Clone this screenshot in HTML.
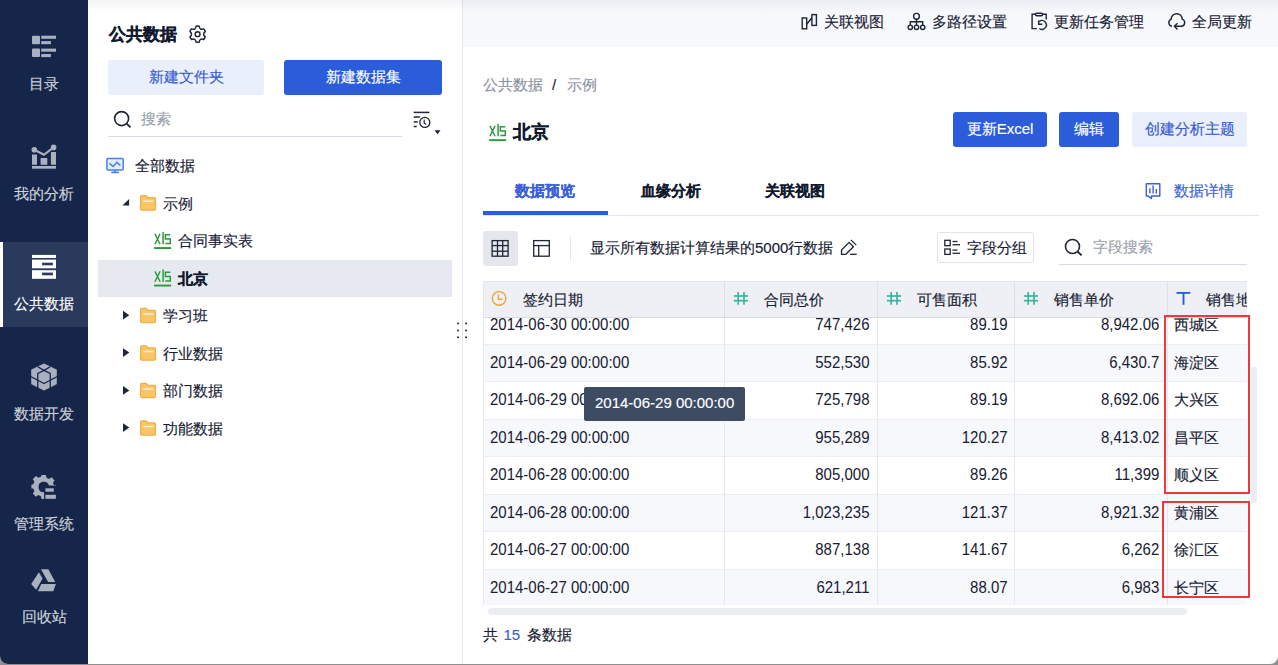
<!DOCTYPE html>
<html><head><meta charset="utf-8">
<style>
*{box-sizing:border-box;margin:0;padding:0}
html,body{width:1278px;height:665px;overflow:hidden;background:#8f8f8f}
body{font-family:"Liberation Sans",sans-serif;font-size:15px;color:#172033;position:relative;-webkit-text-stroke:.15px currentColor}
#win{position:absolute;left:0;top:0;width:1278px;height:663.5px;background:#fff;border-radius:0 0 8px 8px;overflow:hidden}
.a{position:absolute;white-space:nowrap}
.t{position:absolute;white-space:nowrap;line-height:20px;height:20px}
svg{position:absolute;overflow:visible}
#side{left:0;top:0;width:88px;height:100%;background:#16264b}
.sl{left:0;width:88px;text-align:center;color:#cdd2da;margin-top:-0.5px}
#topsh{left:88px;top:0;width:1190px;height:12px;background:linear-gradient(rgba(20,30,60,.05),rgba(20,30,60,0))}
#hdr{left:463px;top:0;width:815px;height:47px;background:#f7f8fc}
.btn{position:absolute;border-radius:3px;text-align:center;line-height:33.2px;height:35px}
.pb{background:#2b5cd9;color:#fff}
.lb{background:#e9effb;color:#3558d3}
.tree{color:#172033}
.cell{position:absolute;line-height:20px;height:20px;white-space:nowrap}
.num{-webkit-text-stroke:0;transform:translateY(.6px) scaleY(1.08);transform-origin:50% 5px}
</style></head><body>
<div id="win">
 <!-- sidebar -->
 <div id="side" class="a"></div>
 <div class="a" style="left:0;top:242px;width:88px;height:85px;background:#2a3a5d"></div>
 <div class="a" style="left:0;top:242px;width:3px;height:85px;background:#fff"></div>
 <div class="t sl" style="top:74.5px">目录</div>
 <div class="t sl" style="top:184.5px">我的分析</div>
 <div class="t sl" style="top:294.5px;color:#fff">公共数据</div>
 <div class="t sl" style="top:404.5px">数据开发</div>
 <div class="t sl" style="top:514.5px">管理系统</div>
 <div class="t sl" style="top:607.5px">回收站</div>

 <!-- sidebar icons -->
 <svg style="left:0;top:0" width="88" height="665" viewBox="0 0 88 665">
  <g fill="#a9b0bf">
   <rect x="32" y="35.7" width="8" height="8.5" rx="1"/>
   <rect x="41.2" y="35.7" width="14.8" height="3.1"/>
   <rect x="41.2" y="41.1" width="9.7" height="3.1"/>
   <rect x="32" y="48.6" width="8" height="8.5" rx="1"/>
   <rect x="41.2" y="48.6" width="14.8" height="3.1"/>
   <rect x="41.2" y="54" width="9.7" height="3.1"/>
  </g>
  <g fill="#a9b0bf">
   <rect x="32" y="154.5" width="5" height="10.3"/>
   <rect x="40.6" y="158" width="6.7" height="6.8"/>
   <rect x="50.9" y="152" width="5.1" height="12.8"/>
   <rect x="32" y="166" width="24" height="2.7"/>
   <polyline points="34.3,149.8 43.9,154.8 53.6,147.4" fill="none" stroke="#16264b" stroke-width="4.4"/>
   <polyline points="34.3,149.8 43.9,154.8 53.6,147.4" fill="none" stroke="#a9b0bf" stroke-width="2.1"/>
   <circle cx="34.3" cy="149.8" r="2.8"/>
   <circle cx="53.6" cy="147.4" r="2.8"/>
  </g>
  <g fill="#fff">
   <rect x="32" y="254.9" width="24" height="3.1"/>
   <rect x="32" y="259.6" width="24" height="8.7"/>
   <rect x="32" y="270.2" width="24" height="8.6"/>
  </g>
  <rect x="42.1" y="262.7" width="10.8" height="2.6" fill="#2a3a5d"/>
  <rect x="42.1" y="272.6" width="10.8" height="2.7" fill="#2a3a5d"/>
  <!-- cube -->
  <polygon points="44,363.8 56.5,369.8 56.5,384.1 44,390.2 31.5,384.1 31.5,369.8" fill="#a9b0bf" stroke="#a9b0bf" stroke-width=".6" stroke-linejoin="round"/>
  <g stroke="#16264b" stroke-width="1.3" fill="none" stroke-linejoin="miter">
   <polyline points="37.75,366.8 44,370.4 50.25,366.8"/>
   <polygon points="44,370.4 50.25,373.4 50.25,380.2 44,383.6 37.75,380.2 37.75,373.4"/>
   <line x1="30.5" y1="376.5" x2="37.75" y2="380.2"/>
   <line x1="57.5" y1="376.5" x2="50.25" y2="380.2"/>
   <line x1="37.75" y1="380.2" x2="37.75" y2="388"/>
   <line x1="50.25" y1="380.2" x2="50.25" y2="388"/>
  </g>
  <!-- gear -->
  <g transform="translate(43.7,487)">
   <path fill="#a9b0bf" d="M-2.2,-12 L2.2,-12 L2.8,-9.2 L5.4,-8.1 L7.8,-9.7 L10.9,-6.6 L9.3,-4.2 L10.1,-1.9 L12.3,-1.9 L12.3,-1.6 L5.2,-1.6 A5.3,5.3 0 1 0 0.4,5.3 L0.4,11.9 L-2.2,12 L-2.8,9.2 L-5.4,8.1 L-7.8,9.7 L-10.9,6.6 L-9.3,4.2 L-10.4,1.6 L-12.3,1.6 L-12.3,-2.2 L-10.4,-2.8 L-9.3,-5.4 L-10.9,-7.8 L-7.8,-10.9 L-5.4,-9.3 L-2.8,-10.2 Z"/>
  </g>
  <rect x="45.4" y="488.3" width="8.4" height="3.4" fill="#a9b0bf"/>
  <rect x="45.4" y="494.8" width="10.5" height="4" fill="#a9b0bf"/>
  <!-- recycle -->
  <g fill="#a9b0bf">
   <polygon points="41,569.2 48.4,569.2 55.2,582 48.1,582"/>
   <polygon points="38.9,572.2 42.6,578.6 36.2,589.8 31.2,584"/>
   <polygon points="41.3,584 55.9,584 53.2,591.2 37.9,591.2"/>
  </g>
 </svg>

 <!-- tree panel -->
 <div class="a" style="left:462px;top:0;width:1px;height:665px;background:#e4e7ee"></div>
 <div class="t" style="left:108.8px;top:23.9px;font-size:17.2px;font-weight:bold;color:#111a2e;-webkit-text-stroke:.3px #111a2e">公共数据</div>
 <svg style="left:0;top:0" width="1" height="1">
  <g transform="translate(197.6,34.2)" fill="none" stroke="#172033" stroke-width="1.45">
   <path d="M-1.55,-7.95 A8.1,8.1 0 0 1 1.55,-7.95 Q2.15,-3.72 6.11,-5.31 A8.1,8.1 0 0 1 7.66,-2.64 Q4.30,0.00 7.66,2.64 A8.1,8.1 0 0 1 6.11,5.31 Q2.15,3.72 1.55,7.95 A8.1,8.1 0 0 1 -1.55,7.95 Q-2.15,3.72 -6.11,5.31 A8.1,8.1 0 0 1 -7.66,2.64 Q-4.30,0.00 -7.66,-2.64 A8.1,8.1 0 0 1 -6.11,-5.31 Q-2.15,-3.72 -1.55,-7.95 Z" stroke-linejoin="round"/>
   <circle cx="0" cy="0" r="2.4"/>
  </g>
 </svg>
 <div class="btn lb" style="left:108px;top:60px;width:156px">新建文件夹</div>
 <div class="btn pb" style="left:284px;top:60px;width:158px">新建数据集</div>
 <svg style="left:0;top:0" width="1" height="1">
  <circle cx="121.6" cy="118.6" r="7" fill="none" stroke="#1d2538" stroke-width="1.6"/>
  <line x1="126.6" y1="123.6" x2="130.5" y2="127.3" stroke="#1d2538" stroke-width="1.8"/>
 </svg>
 <div class="t" style="left:141px;top:109px;color:#9aa1ad">搜索</div>
 <div class="a" style="left:108px;top:135.5px;width:294px;height:1px;background:#d7dbe3"></div>
 <svg style="left:0;top:0" width="1" height="1">
  <g stroke="#1d2538" stroke-width="1.5">
   <line x1="413.7" y1="112.4" x2="429.4" y2="112.4"/>
   <line x1="413.7" y1="117" x2="419.9" y2="117"/>
   <line x1="413.7" y1="121.9" x2="417.7" y2="121.9"/>
   <line x1="413.7" y1="126.5" x2="416.7" y2="126.5"/>
  </g>
  <circle cx="424.8" cy="122.4" r="5" fill="#fff" stroke="#1d2538" stroke-width="1.3"/>
  <polyline points="424.2,119.4 424.2,123.2 426.3,124.6" fill="none" stroke="#1d2538" stroke-width="1.2"/>
  <polygon points="434.5,130.3 440.5,130.3 437.5,134.3" fill="#1d2538"/>
 </svg>

 <!-- tree rows -->
 <div class="a" style="left:98px;top:260.2px;width:354px;height:36.5px;background:#e6e9f0"></div>
 <svg style="left:0;top:0" width="1" height="1">
  <rect x="106.9" y="158.6" width="16.3" height="11.3" rx="1" fill="#e5eefd" stroke="#4a80e8" stroke-width="1.5"/>
  <polyline points="109.5,163.4 113.1,166.5 116.9,162.3 120.4,165.5" fill="none" stroke="#4a80e8" stroke-width="1.6"/>
  <rect x="114.3" y="170" width="1.6" height="2" fill="#4a80e8"/>
  <rect x="111.2" y="171.6" width="7.8" height="1.6" rx=".8" fill="#4a80e8"/>
 </svg>
 <div class="t tree" style="left:135px;top:156px">全部数据</div>
 <svg style="left:0;top:0" width="1" height="1">
  <polygon points="122.4,205.6 129.1,205.6 129.1,199" fill="#1d2538"/>
 </svg>
 <div class="t tree" style="left:162.5px;top:193.5px">示例</div>
 <div class="t tree" style="left:177.5px;top:231px">合同事实表</div>
 <div class="t tree" style="left:177.5px;top:268.5px;font-weight:bold;color:#111a2e;-webkit-text-stroke:.25px #111a2e">北京</div>
 <div class="t tree" style="left:162.5px;top:306px">学习班</div>
 <div class="t tree" style="left:162.5px;top:343.5px">行业数据</div>
 <div class="t tree" style="left:162.5px;top:381px">部门数据</div>
 <div class="t tree" style="left:162.5px;top:418.5px">功能数据</div>

 <!-- header -->
 <div id="hdr" class="a"></div>
 <div id="topsh" class="a"></div>
 <div class="t" style="left:824px;top:11.5px">关联视图</div>
 <div class="t" style="left:931.5px;top:11.5px">多路径设置</div>
 <div class="t" style="left:1054px;top:11.5px">更新任务管理</div>
 <div class="t" style="left:1192px;top:11.5px">全局更新</div>

 <!-- main -->
 <div class="t" style="left:483px;top:74.5px;color:#8b929e">公共数据</div>
 <div class="t" style="left:552px;top:74.5px;color:#1d2538">/</div>
 <div class="t" style="left:566.5px;top:74.5px;color:#8b929e">示例</div>
 <div class="t" style="left:513px;top:122px;font-size:18px;font-weight:bold;color:#111a2e;-webkit-text-stroke:.3px #111a2e">北京</div>
 <div class="btn pb" style="left:953px;top:112px;width:94px">更新Excel</div>
 <div class="btn pb" style="left:1059px;top:112px;width:60px">编辑</div>
 <div class="btn lb" style="left:1132px;top:112px;width:115px">创建分析主题</div>

 <div class="t" style="left:515px;top:181px;font-weight:bold;color:#3a5fd9">数据预览</div>
 <div class="t" style="left:640.5px;top:181px;font-weight:bold;color:#111a2e">血缘分析</div>
 <div class="t" style="left:765px;top:181px;font-weight:bold;color:#111a2e">关联视图</div>
 <div class="a" style="left:483px;top:214.5px;width:776px;height:1.5px;background:#e3e6ee"></div>
 <div class="a" style="left:483px;top:211px;width:125px;height:4px;background:#2b5cd9"></div>
 <div class="t" style="left:1174px;top:181px;color:#3a5fd9">数据详情</div>

 <!-- toolbar -->
 <div class="a" style="left:483px;top:231px;width:35px;height:35px;border-radius:3px;background:#e5e7ec"></div>
 <div class="a" style="left:570px;top:236px;width:1px;height:25px;background:#e6e8ee"></div>
 <div class="t" style="left:590px;top:237.5px">显示所有数据计算结果的5000行数据</div>
 <div class="a" style="left:936.5px;top:232.4px;width:97px;height:31px;border:1px solid #dfe2e9;border-radius:3px"></div>
 <div class="t" style="left:967px;top:237.5px">字段分组</div>
 <div class="t" style="left:1092.5px;top:237px;color:#9aa1ad">字段搜索</div>
 <div class="a" style="left:1059px;top:263.5px;width:188px;height:1px;background:#d7dbe3"></div>

 <!-- table -->
 <div id="tbl" class="a" style="left:483px;top:281px;width:764px;height:324px;overflow:hidden;background:#fff">
<div class="a" style="left:0;top:36px;width:764px;height:288px;overflow:hidden">
<div class="a" style="left:0;top:-9.8px;width:764px;height:37.5px;background:#fff;border-bottom:1px solid #eceef3"></div>
<div class="cell num" style="left:7px;top:-2.75px">2014-06-30 00:00:00</div>
<div class="cell num" style="right:377.5px;top:-2.75px">747,426</div>
<div class="cell num" style="right:239.4px;top:-2.75px">89.19</div>
<div class="cell num" style="right:87.7px;top:-2.75px">8,942.06</div>
<div class="cell" style="left:691px;top:-1.85px">西城区</div>
<div class="a" style="left:0;top:27.7px;width:764px;height:37.5px;background:#f7f8fb;border-bottom:1px solid #eceef3"></div>
<div class="cell num" style="left:7px;top:34.75px">2014-06-29 00:00:00</div>
<div class="cell num" style="right:377.5px;top:34.75px">552,530</div>
<div class="cell num" style="right:239.4px;top:34.75px">85.92</div>
<div class="cell num" style="right:87.7px;top:34.75px">6,430.7</div>
<div class="cell" style="left:691px;top:35.65px">海淀区</div>
<div class="a" style="left:0;top:65.2px;width:764px;height:37.5px;background:#fff;border-bottom:1px solid #eceef3"></div>
<div class="cell num" style="left:7px;top:72.25px">2014-06-29 00:00:00</div>
<div class="cell num" style="right:377.5px;top:72.25px">725,798</div>
<div class="cell num" style="right:239.4px;top:72.25px">89.19</div>
<div class="cell num" style="right:87.7px;top:72.25px">8,692.06</div>
<div class="cell" style="left:691px;top:73.15px">大兴区</div>
<div class="a" style="left:0;top:102.7px;width:764px;height:37.5px;background:#f7f8fb;border-bottom:1px solid #eceef3"></div>
<div class="cell num" style="left:7px;top:109.75px">2014-06-29 00:00:00</div>
<div class="cell num" style="right:377.5px;top:109.75px">955,289</div>
<div class="cell num" style="right:239.4px;top:109.75px">120.27</div>
<div class="cell num" style="right:87.7px;top:109.75px">8,413.02</div>
<div class="cell" style="left:691px;top:110.65px">昌平区</div>
<div class="a" style="left:0;top:140.2px;width:764px;height:37.5px;background:#fff;border-bottom:1px solid #eceef3"></div>
<div class="cell num" style="left:7px;top:147.25px">2014-06-28 00:00:00</div>
<div class="cell num" style="right:377.5px;top:147.25px">805,000</div>
<div class="cell num" style="right:239.4px;top:147.25px">89.26</div>
<div class="cell num" style="right:87.7px;top:147.25px">11,399</div>
<div class="cell" style="left:691px;top:148.15px">顺义区</div>
<div class="a" style="left:0;top:177.7px;width:764px;height:37.5px;background:#f7f8fb;border-bottom:1px solid #eceef3"></div>
<div class="cell num" style="left:7px;top:184.75px">2014-06-28 00:00:00</div>
<div class="cell num" style="right:377.5px;top:184.75px">1,023,235</div>
<div class="cell num" style="right:239.4px;top:184.75px">121.37</div>
<div class="cell num" style="right:87.7px;top:184.75px">8,921.32</div>
<div class="cell" style="left:691px;top:185.65px">黄浦区</div>
<div class="a" style="left:0;top:215.2px;width:764px;height:37.5px;background:#fff;border-bottom:1px solid #eceef3"></div>
<div class="cell num" style="left:7px;top:222.25px">2014-06-27 00:00:00</div>
<div class="cell num" style="right:377.5px;top:222.25px">887,138</div>
<div class="cell num" style="right:239.4px;top:222.25px">141.67</div>
<div class="cell num" style="right:87.7px;top:222.25px">6,262</div>
<div class="cell" style="left:691px;top:223.15px">徐汇区</div>
<div class="a" style="left:0;top:252.7px;width:764px;height:37.5px;background:#f7f8fb;border-bottom:1px solid #eceef3"></div>
<div class="cell num" style="left:7px;top:259.75px">2014-06-27 00:00:00</div>
<div class="cell num" style="right:377.5px;top:259.75px">621,211</div>
<div class="cell num" style="right:239.4px;top:259.75px">88.07</div>
<div class="cell num" style="right:87.7px;top:259.75px">6,983</div>
<div class="cell" style="left:691px;top:260.65px">长宁区</div>
<div class="a" style="left:241.0px;top:0;width:1px;height:288px;background:#e6e8ee"></div>
<div class="a" style="left:394.0px;top:0;width:1px;height:288px;background:#e6e8ee"></div>
<div class="a" style="left:531.0px;top:0;width:1px;height:288px;background:#e6e8ee"></div>
<div class="a" style="left:683.8px;top:0;width:1px;height:288px;background:#e6e8ee"></div>
<div class="a" style="left:0;top:0;width:1px;height:288px;background:#e6e8ee"></div>
</div>
<div class="a" style="left:0;top:0;width:764px;height:36.5px;background:#eef0f5;border-top:1px solid #e3e6ee;border-bottom:1px solid #d9dde5;border-left:1px solid #e3e6ee"></div>
<div class="a" style="left:241.0px;top:0;width:1px;height:36px;background:#dcdfe7"></div>
<div class="a" style="left:394.0px;top:0;width:1px;height:36px;background:#dcdfe7"></div>
<div class="a" style="left:531.0px;top:0;width:1px;height:36px;background:#dcdfe7"></div>
<div class="a" style="left:683.8px;top:0;width:1px;height:36px;background:#dcdfe7"></div>
<div class="cell" style="left:39.8px;top:8.5px">签约日期</div>
<div class="cell" style="left:281.1px;top:8.5px">合同总价</div>
<div class="cell" style="left:434.2px;top:8.5px">可售面积</div>
<div class="cell" style="left:570.7px;top:8.5px">销售单价</div>
<div class="cell" style="left:723.4px;top:8.5px">销售地址</div>

 </div>

 <!-- ICONS -->
 <svg style="left:0;top:0" width="1278" height="665" viewBox="0 0 1278 665">
  <!-- header icons -->
  <g fill="none" stroke="#1d2538" stroke-width="1.4">
   <rect x="802.2" y="18" width="4.5" height="10.8"/>
   <rect x="811.9" y="14.6" width="4.5" height="10.8"/>
   <line x1="806.7" y1="24.2" x2="811.9" y2="17.8"/>
   <circle cx="916.5" cy="16.3" r="2.9"/>
   <line x1="916.5" y1="19.2" x2="916.5" y2="25"/>
   <polyline points="910.3,25 910.3,21.7 922.7,21.7 922.7,25"/>
   <circle cx="910.3" cy="27.3" r="2.2"/>
   <circle cx="916.5" cy="27.3" r="2.2"/>
   <circle cx="922.7" cy="27.3" r="2.2"/>
   <polyline points="1035.5,14.3 1032.1,14.3 1032.1,28.6 1036.9,28.6"/>
   <polyline points="1042.6,14.3 1046.2,14.3 1046.2,19.4"/>
   <rect x="1035.5" y="13.2" width="7.1" height="2.5" rx="1.25"/>
   <path d="M1039.2,21.5 A4.4,4.4 0 1 1 1039.3,28.5"/>
   <polyline points="1038.7,20.5 1038.7,24.3 1042.3,24.3"/>
   <path d="M1171.9,26.3 A3.7,3.7 0 0 1 1171.2,19.2 A5.3,5.3 0 0 1 1182.2,19.2 A3.7,3.7 0 0 1 1181.8,26.3 L1174.6,26.3"/>
   <polyline points="1177.5,23.3 1174.4,26.3 1177.5,29.4"/>
  </g>
  <!-- tree icons -->
  <g fill="#1d2538">
   <polygon points="123,310.8 129.3,315.2 123,319.6"/>
   <polygon points="123,348.2 129.3,352.6 123,357"/>
   <polygon points="123,386 129.3,390.4 123,394.8"/>
   <polygon points="123,423.2 129.3,427.6 123,432"/>
  </g>
    <path d="M140.6,196.8 a1.1,1.1 0 0 1 1.1,-1.1 h4.4 l2,2 h6.3 a1.1,1.1 0 0 1 1.1,1.1 v10.2 a1.1,1.1 0 0 1 -1.1,1.1 h-12.8 a1.1,1.1 0 0 1 -1.1,-1.1 z" fill="#f8c567" stroke="#f1b048" stroke-width="1.2"/>
  <rect x="143" y="200.6" width="10.3" height="1.5" rx=".7" fill="#fff0cf"/>
  <path d="M140.6,309.4 a1.1,1.1 0 0 1 1.1,-1.1 h4.4 l2,2 h6.3 a1.1,1.1 0 0 1 1.1,1.1 v10.2 a1.1,1.1 0 0 1 -1.1,1.1 h-12.8 a1.1,1.1 0 0 1 -1.1,-1.1 z" fill="#f8c567" stroke="#f1b048" stroke-width="1.2"/>
  <rect x="143" y="313.2" width="10.3" height="1.5" rx=".7" fill="#fff0cf"/>
  <path d="M140.6,346.9 a1.1,1.1 0 0 1 1.1,-1.1 h4.4 l2,2 h6.3 a1.1,1.1 0 0 1 1.1,1.1 v10.2 a1.1,1.1 0 0 1 -1.1,1.1 h-12.8 a1.1,1.1 0 0 1 -1.1,-1.1 z" fill="#f8c567" stroke="#f1b048" stroke-width="1.2"/>
  <rect x="143" y="350.7" width="10.3" height="1.5" rx=".7" fill="#fff0cf"/>
  <path d="M140.6,384.4 a1.1,1.1 0 0 1 1.1,-1.1 h4.4 l2,2 h6.3 a1.1,1.1 0 0 1 1.1,1.1 v10.2 a1.1,1.1 0 0 1 -1.1,1.1 h-12.8 a1.1,1.1 0 0 1 -1.1,-1.1 z" fill="#f8c567" stroke="#f1b048" stroke-width="1.2"/>
  <rect x="143" y="388.2" width="10.3" height="1.5" rx=".7" fill="#fff0cf"/>
  <path d="M140.6,421.9 a1.1,1.1 0 0 1 1.1,-1.1 h4.4 l2,2 h6.3 a1.1,1.1 0 0 1 1.1,1.1 v10.2 a1.1,1.1 0 0 1 -1.1,1.1 h-12.8 a1.1,1.1 0 0 1 -1.1,-1.1 z" fill="#f8c567" stroke="#f1b048" stroke-width="1.2"/>
  <rect x="143" y="425.7" width="10.3" height="1.5" rx=".7" fill="#fff0cf"/>
  <g transform="translate(154,232)" fill="none" stroke="#2b9a3b" stroke-width="1.5">
   <path d="M0.9,1.8 L6.1,12.2 M6.1,1.8 L0.9,12.2" stroke-width="1.45"/>
   <line x1="9.1" y1="0" x2="9.1" y2="12.2" stroke-width="1.5"/>
   <path d="M16.3,2.7 h-4.9 v4.2 h4.9 v4.5 h-5"/>
   <rect x="0.1" y="15.1" width="17" height="1.9" fill="#2b9a3b" stroke="none"/>
  </g>
  <g transform="translate(154,269.5)" fill="none" stroke="#2b9a3b" stroke-width="1.5">
   <path d="M0.9,1.8 L6.1,12.2 M6.1,1.8 L0.9,12.2" stroke-width="1.45"/>
   <line x1="9.1" y1="0" x2="9.1" y2="12.2" stroke-width="1.5"/>
   <path d="M16.3,2.7 h-4.9 v4.2 h4.9 v4.5 h-5"/>
   <rect x="0.1" y="15.1" width="17" height="1.9" fill="#2b9a3b" stroke="none"/>
  </g>
  <g transform="translate(489,124.1)" fill="none" stroke="#2b9a3b" stroke-width="1.5">
   <path d="M0.9,1.8 L6.1,12.2 M6.1,1.8 L0.9,12.2" stroke-width="1.45"/>
   <line x1="9.1" y1="0" x2="9.1" y2="12.2" stroke-width="1.5"/>
   <path d="M16.3,2.7 h-4.9 v4.2 h4.9 v4.5 h-5"/>
   <rect x="0.1" y="15.1" width="17" height="1.9" fill="#2b9a3b" stroke="none"/>
  </g>
 </svg>

 <svg style="left:0;top:0" width="1278" height="665" viewBox="0 0 1278 665">
  <!-- toolbar icons -->
  <g fill="none" stroke="#1d2538" stroke-width="1.3">
   <rect x="492.1" y="240.6" width="16" height="15.6"/>
   <line x1="497.5" y1="240.6" x2="497.5" y2="256.2"/>
   <line x1="502.7" y1="240.6" x2="502.7" y2="256.2"/>
   <line x1="492.1" y1="245.6" x2="508.1" y2="245.6"/>
   <line x1="492.1" y1="251.2" x2="508.1" y2="251.2"/>
   <rect x="533.7" y="240.6" width="15.6" height="15.6"/>
   <line x1="533.7" y1="245.6" x2="549.3" y2="245.6"/>
   <line x1="538.7" y1="245.6" x2="538.7" y2="256.2"/>
   <path d="M841.5,254.3 L841.5,250 L849.1,242.4 L853.4,246.7 L845.8,254.3 Z" stroke-linejoin="miter"/>
   <line x1="850.9" y1="239.9" x2="856.3" y2="245.1"/>
   <line x1="850.1" y1="254.3" x2="856.7" y2="254.3"/>
   <rect x="944.8" y="240.3" width="5.4" height="5.4"/>
   <rect x="944.8" y="249" width="5.4" height="5.4"/>
   <line x1="952.5" y1="241.5" x2="957.5" y2="241.5"/>
   <line x1="952.5" y1="244.7" x2="960" y2="244.7"/>
   <line x1="952.5" y1="250.1" x2="957.5" y2="250.1"/>
   <line x1="952.5" y1="253.3" x2="960" y2="253.3"/>
  </g>
  <circle cx="1072.5" cy="246.5" r="7" fill="none" stroke="#1d2538" stroke-width="1.6"/>
  <line x1="1077.5" y1="251.5" x2="1081.6" y2="255.4" stroke="#1d2538" stroke-width="1.8"/>
  <!-- data detail icon -->
  <g fill="none" stroke="#3a5fd9" stroke-width="1.4">
   <path d="M1148.3,196 L1146.3,196 L1146.3,183.7 L1159.8,183.7 L1159.8,196 L1151.5,196 L1151.5,198.6 Z" stroke-linejoin="round"/>
   <line x1="1149.9" y1="188.3" x2="1149.9" y2="193.5"/>
   <line x1="1153.1" y1="185.6" x2="1153.1" y2="193.5"/>
   <line x1="1156.3" y1="189" x2="1156.3" y2="193.5"/>
  </g>
  <!-- table header icons -->
  <circle cx="499.1" cy="298.4" r="6.8" fill="none" stroke="#f0a535" stroke-width="1.4"/>
  <polyline points="498.3,294.6 498.3,299.3 502.6,299.3" fill="none" stroke="#f0a535" stroke-width="1.4"/>
  <g stroke="#3ab3a0" stroke-width="1.7" id="hash1">
   <line x1="738.2" y1="292" x2="738.2" y2="304.8"/><line x1="744" y1="292" x2="744" y2="304.8"/>
   <line x1="733.9" y1="296" x2="748" y2="296"/><line x1="733.9" y1="300.7" x2="748" y2="300.7"/>
  </g>
  <g stroke="#3ab3a0" stroke-width="1.7" transform="translate(153,0)">
   <line x1="738.2" y1="292" x2="738.2" y2="304.8"/><line x1="744" y1="292" x2="744" y2="304.8"/>
   <line x1="733.9" y1="296" x2="748" y2="296"/><line x1="733.9" y1="300.7" x2="748" y2="300.7"/>
  </g>
  <g stroke="#3ab3a0" stroke-width="1.7" transform="translate(290,0)">
   <line x1="738.2" y1="292" x2="738.2" y2="304.8"/><line x1="744" y1="292" x2="744" y2="304.8"/>
   <line x1="733.9" y1="296" x2="748" y2="296"/><line x1="733.9" y1="300.7" x2="748" y2="300.7"/>
  </g>
  <g stroke="#2e5ad8" stroke-width="1.9">
   <line x1="1176.5" y1="292.9" x2="1190.3" y2="292.9"/>
   <line x1="1183.5" y1="292.9" x2="1183.5" y2="304.8"/>
  </g>
  <!-- drag handle -->
  <g fill="#1d2538">
   <circle cx="458" cy="323.6" r="1"/><circle cx="466.1" cy="323.6" r="1"/>
   <circle cx="458" cy="330.4" r="1"/><circle cx="466.1" cy="330.4" r="1"/>
   <circle cx="458" cy="337.2" r="1"/><circle cx="466.1" cy="337.2" r="1"/>
  </g>
  <!-- red boxes -->
  <rect x="1165" y="316" width="84" height="177" fill="none" stroke="#f0383b" stroke-width="2"/>
  <rect x="1163" y="502" width="86" height="95" fill="none" stroke="#f0383b" stroke-width="2"/>
 </svg>
 <!-- scrollbars -->
 <div class="a" style="left:488px;top:608px;width:699px;height:7px;border-radius:3.5px;background:#ecedf0"></div>
 <div class="a" style="left:1250.5px;top:367px;width:6.5px;height:136px;border-radius:3.5px;background:#ecedf0"></div>
 <!-- tooltip -->
 <div class="a" style="left:584px;top:387.3px;width:161px;height:33.5px;background:#3d4b63;border-radius:2px;color:#fff;line-height:32.5px;padding-left:11px">2014-06-29 00:00:00</div>

 <!-- footer -->
 <div class="t" style="left:483px;top:624.5px">共</div><div class="t" style="left:503.5px;top:624.5px;color:#3a5fd9">15</div><div class="t" style="left:526.5px;top:624.5px">条数据</div>
</div>
</body></html>
